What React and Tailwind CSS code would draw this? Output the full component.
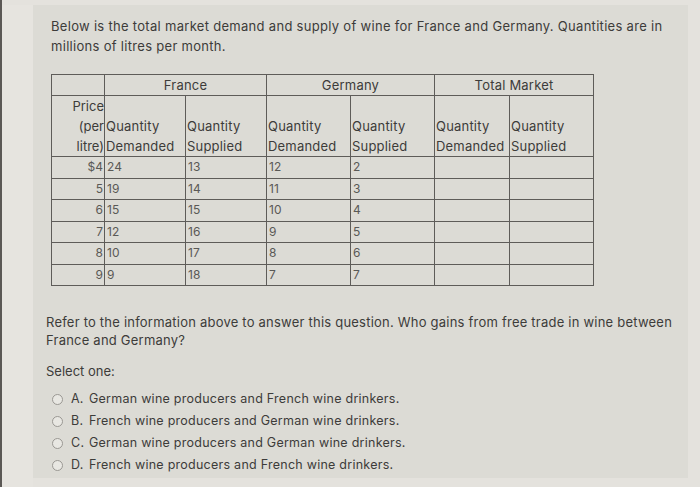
import React from "react";

const rows = [
  ["$4", "24", "13", "12", "2"],
  ["5", "19", "14", "11", "3"],
  ["6", "15", "15", "10", "4"],
  ["7", "12", "16", "9", "5"],
  ["8", "10", "17", "8", "6"],
  ["9", "9", "18", "7", "7"],
];

const options = [
  ["A.", "German wine producers and French wine drinkers."],
  ["B.", "French wine producers and German wine drinkers."],
  ["C.", "German wine producers and German wine drinkers."],
  ["D.", "French wine producers and French wine drinkers."],
];

export default function App() {
  const font = { fontFamily: "Inter, 'Noto Sans', sans-serif" };
  return (
    <div
      className="w-[700px] h-[487px] overflow-hidden bg-[#e4e2dd] border-l-2 border-[#5b5855] flex flex-col text-[#3d3c3a]"
      style={font}
    >
      <div className="flex flex-1 pt-[5px]">
        <div className="w-[31px] shrink-0 bg-[#e6e4df]" />
        <div className="w-[655px] h-[473px] bg-[#dcdbd5] pl-[18px] pt-[11px]">
          <p className="text-[13px] leading-[20px] tracking-[0.3px] whitespace-nowrap">
            Below is the total market demand and supply of wine for France and Germany. Quantities are in
            <br />
            millions of litres per month.
          </p>

          <table className="mt-[18px] border-collapse text-[13px] leading-[20px] tracking-[0.2px] table-fixed">
            <colgroup>
              <col className="w-[53px]" />
              <col className="w-[81px]" />
              <col className="w-[81px]" />
              <col className="w-[84px]" />
              <col className="w-[84px]" />
              <col className="w-[75px]" />
              <col className="w-[84px]" />
            </colgroup>
            <tbody>
              <tr className="h-[21px]">
                <td className="border border-[#5e5c59]" />
                <td colSpan={2} className="border border-[#5e5c59] text-center">France</td>
                <td colSpan={2} className="border border-[#5e5c59] text-center">Germany</td>
                <td colSpan={2} className="border border-[#5e5c59] text-center">Total Market</td>
              </tr>
              <tr className="h-[61px]">
                <td className="border border-[#5e5c59] align-bottom text-right whitespace-nowrap tracking-normal">
                  Price
                  <br />
                  (per
                  <br />
                  litre)
                </td>
                {[0, 1, 2, 3, 4, 5].map((i) => (
                  <td key={i} className="border border-[#5e5c59] align-bottom whitespace-nowrap pl-px">
                    Quantity
                    <br />
                    {i % 2 === 0 ? "Demanded" : "Supplied"}
                  </td>
                ))}
              </tr>
              {rows.map((r, idx) => (
                <tr key={idx} className="h-[21.5px] text-[12px] text-[#5a5956] tracking-normal">
                  <td className="border border-[#5e5c59] text-right pr-px">{r[0]}</td>
                  <td className="border border-[#5e5c59] pl-[2px]">{r[1]}</td>
                  <td className="border border-[#5e5c59] pl-[2px]">{r[2]}</td>
                  <td className="border border-[#5e5c59] pl-[2px]">{r[3]}</td>
                  <td className="border border-[#5e5c59] pl-[2px]">{r[4]}</td>
                  <td className="border border-[#5e5c59]" />
                  <td className="border border-[#5e5c59]" />
                </tr>
              ))}
            </tbody>
          </table>

          <p className="mt-[27px] -ml-[5px] text-[13px] leading-[18px] tracking-[0.22px] whitespace-nowrap">
            Refer to the information above to answer this question. Who gains from free trade in wine between
            <br />
            France and Germany?
          </p>

          <p className="mt-[13px] -ml-[5px] text-[13px] leading-[18px]">Select one:</p>

          <div className="mt-[10px] flex flex-col gap-[4px]">
            {options.map(([l, t]) => (
              <div key={l} className="flex items-center h-[18px] text-[12.5px] tracking-[0.25px]">
                <span className="ml-[1px] w-[11px] h-[11px] rounded-full border border-[#9a9893] bg-[#e8e7e2]" />
                <span className="ml-[8px] w-[18px]">{l}</span>
                <span>{t}</span>
              </div>
            ))}
          </div>
        </div>
      </div>
    </div>
  );
}
